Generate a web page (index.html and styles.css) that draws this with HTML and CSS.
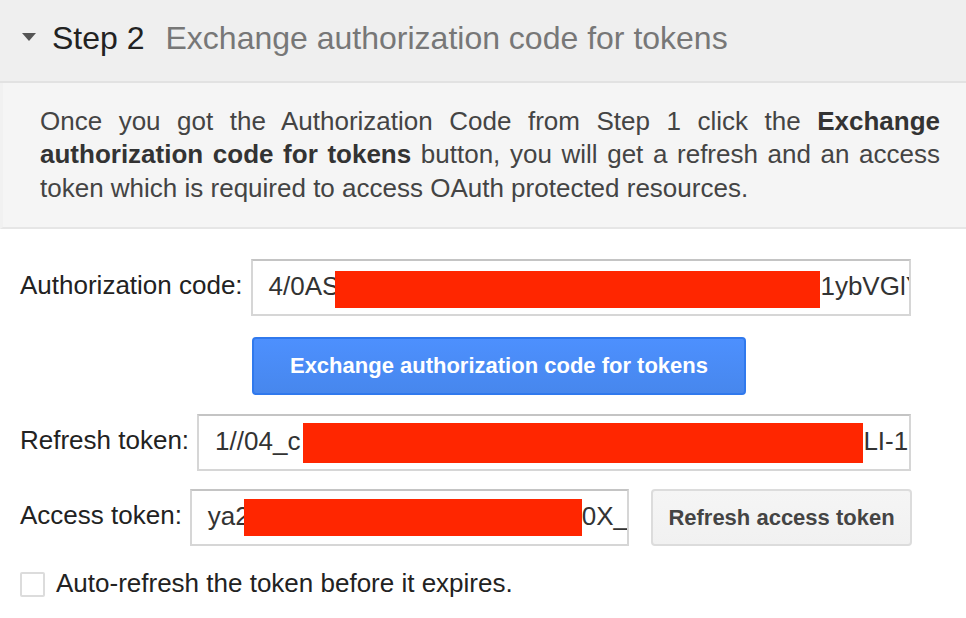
FILE: index.html
```html
<!DOCTYPE html>
<html>
<head>
<meta charset="utf-8">
<link rel="stylesheet" href="styles.css">
</head>
<body>
<div class="step">
  <div class="step-header">
    <svg class="caret" width="14" height="8" viewBox="0 0 14 8"><path d="M0 0H14L7 8Z" fill="#555"/></svg>
    <span class="step-num">Step 2</span>
    <span class="step-title">Exchange authorization code for tokens</span>
  </div>
  <div class="step-desc">
    Once you got the Authorization Code from Step 1 click the <b>Exchange authorization code for tokens</b> button, you will get a refresh and an access token which is required to access OAuth protected resources.
  </div>
  <div class="step-form">
    <div class="row row-auth">
      <label class="lbl">Authorization code:</label>
      <div class="field"><span class="val">4/0AS<span class="redact r1"></span>1ybVGlYk8d</span></div>
    </div>
    <div class="btn-row">
      <button class="btn-primary">Exchange authorization code for tokens</button>
    </div>
    <div class="row row-refresh">
      <label class="lbl">Refresh token:</label>
      <div class="field"><span class="val">1//04_c<span class="redact r2"></span>LI-1eQw9</span></div>
    </div>
    <div class="row row-access">
      <label class="lbl">Access token:</label>
      <div class="field"><span class="val">ya2<span class="redact r3"></span>0X_</span></div>
      <button class="btn-secondary">Refresh access token</button>
    </div>
    <div class="check-row">
      <span class="checkbox"></span>
      <span class="check-label">Auto-refresh the token before it expires.</span>
    </div>
  </div>
</div>
</body>
</html>
```

FILE: styles.css
```css
html, body {
  margin: 0;
  padding: 0;
  background: #ffffff;
}
body {
  font-family: "Liberation Sans", Arial, sans-serif;
  color: #222;
  width: 966px;
  height: 618px;
  overflow: hidden;
}
.step-header {
  display: flex;
  align-items: center;
  background: #efefef;
  height: 83px;
  box-sizing: border-box;
  padding: 0 0 4px 22px;
  border-bottom: 2px solid #e2e2e2;
  font-size: 32px;
  line-height: 37px;
}
.caret {
  flex: none;
  margin-right: 16px;
  margin-top: -4px;
}
.step-num {
  color: #222;
}
.step-title {
  color: #777;
  margin-left: 21px;
}
.step-desc {
  background: #f5f5f5;
  padding: 22px 26px 22px 37px;
  font-size: 26px;
  line-height: 33.4px;
  color: #444;
  text-align: justify;
  border-bottom: 2px solid #e6e6e6;
  border-left: 3px solid #f1f1f1;
}
.step-desc b {
  color: #333;
}
.step-form {
  padding: 30px 55px 0 20px;
  font-size: 26px;
}
.row {
  display: flex;
  align-items: center;
  gap: 8px;
}
.lbl {
  color: #222;
  white-space: nowrap;
  flex: none;
  margin-top: -4px;
}
.field {
  flex: 1;
  min-width: 0;
  height: 57px;
  box-sizing: border-box;
  border: 2px solid #d6d6d6;
  border-top-color: #c4c4c4;
  background: #fff;
  padding: 0 0 0 16px;
  overflow: hidden;
  white-space: nowrap;
  display: flex;
  align-items: center;
}
.val {
  color: #333;
  white-space: nowrap;
  display: flex;
  align-items: center;
  margin-top: -3px;
}
.redact {
  display: inline-block;
  background: #ff2600;
  flex: none;
}
.r1 {
  width: 485px;
  height: 37px;
  margin-left: -4px;
  margin-top: 6px;
}
.r2 {
  width: 560px;
  height: 40px;
  margin-left: 3px;
  margin-top: 3px;
}
.r3 {
  width: 338px;
  height: 37px;
  margin-left: -6px;
  margin-top: 3px;
}
.btn-row {
  padding: 21px 0 19px 232px;
}
.btn-primary {
  display: block;
  height: 58px;
  width: 494px;
  box-sizing: border-box;
  background: linear-gradient(#4d90fe, #4787ed);
  border: 2px solid #3079ed;
  border-radius: 4px;
  color: #fff;
  font-family: "Liberation Sans", Arial, sans-serif;
  font-weight: bold;
  font-size: 22px;
  padding: 0;
  margin: 0;
}
.row-access {
  margin-top: 18px;
}
.row-access .field {
  margin-right: 14px;
}
.btn-secondary {
  flex: none;
  width: 261px;
  height: 57px;
  box-sizing: border-box;
  background: linear-gradient(#f5f5f5, #f1f1f1);
  border: 2px solid #dcdcdc;
  border-radius: 4px;
  color: #444;
  font-family: "Liberation Sans", Arial, sans-serif;
  font-weight: bold;
  font-size: 22px;
  padding: 0;
  margin: 0 -1px 0 0;
}
.check-row {
  display: flex;
  align-items: center;
  margin-top: 24px;
}
.checkbox {
  width: 25px;
  height: 25px;
  box-sizing: border-box;
  border: 2px solid #dcdcdc;
  border-radius: 2px;
  background: #fff;
  flex: none;
}
.check-label {
  margin-left: 11px;
  color: #222;
  margin-top: -2px;
}
```
